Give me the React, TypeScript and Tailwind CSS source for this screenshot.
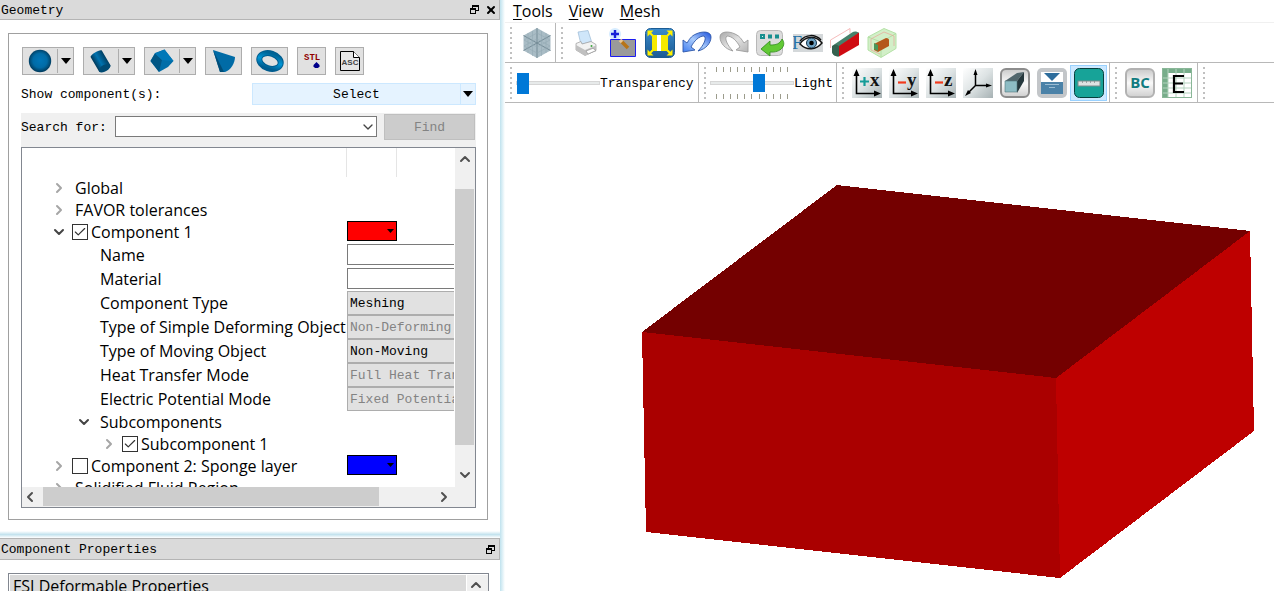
import { useState } from 'react'
import type { ReactNode } from 'react'
import { Check, ChevronDown, ChevronLeft, ChevronRight, ChevronUp, X } from 'lucide-react'

const MONO = "font-['Liberation_Mono',monospace] text-[13px] leading-5"

/* ---------- small shared pieces ---------- */

function Caret({ small }: { small?: boolean }) {
  return small ? (
    <svg width="7" height="4" viewBox="0 0 7 4"><path d="M0 0h7L3.5 4z" fill="#000" /></svg>
  ) : (
    <svg width="10" height="6" viewBox="0 0 10 6"><path d="M0 0h10L5 6z" fill="#000" /></svg>
  )
}

function FloatIcon() {
  return (
    <svg width="9" height="9" viewBox="0 0 9 9" fill="#000" shapeRendering="crispEdges">
      <path d="M2 0h7v6H6V5h2V2H3v1H2z" />
      <path fillRule="evenodd" d="M0 3h6v6H0zM1 5v3h4V5z" />
    </svg>
  )
}

function Handle() {
  return (
    <svg width="4" height="32" viewBox="0 0 4 32" className="shrink-0" aria-hidden>
      {[0, 5, 10, 15, 20, 25, 30].map(y => (
        <rect key={y} x="1" y={y} width="2" height="2" fill="#c0c0c0" />
      ))}
    </svg>
  )
}

/* ---------- geometry shape icons ---------- */

function Defs() {
  return (
    <svg width="0" height="0" className="absolute" aria-hidden>
      <defs>
        <radialGradient id="ball" cx="50%" cy="48%" r="52%">
          <stop offset="0" stopColor="#0076b8" />
          <stop offset="0.6" stopColor="#006ba6" />
          <stop offset="1" stopColor="#003a5c" />
        </radialGradient>
        <linearGradient id="cyl" x1="0" x2="1">
          <stop offset="0" stopColor="#00395a" />
          <stop offset="0.45" stopColor="#0073b0" />
          <stop offset="1" stopColor="#003f63" />
        </linearGradient>
        <linearGradient id="ring" x1="0" y1="0" x2="0" y2="1">
          <stop offset="0" stopColor="#006496" />
          <stop offset="0.5" stopColor="#0096d6" />
          <stop offset="1" stopColor="#005d90" />
        </linearGradient>
        <linearGradient id="tile" x1="0" y1="0" x2="1" y2="1">
          <stop offset="0" stopColor="#fff" />
          <stop offset="0.5" stopColor="#dde3e4" />
          <stop offset="1" stopColor="#a7b2b4" />
        </linearGradient>
        <linearGradient id="plate" x1="0" y1="0" x2="0" y2="1">
          <stop offset="0" stopColor="#c9c9c9" />
          <stop offset="0.5" stopColor="#fafafa" />
          <stop offset="1" stopColor="#cfcfcf" />
        </linearGradient>
        <linearGradient id="undo" x1="0" y1="1" x2="1" y2="0">
          <stop offset="0" stopColor="#3f7df0" />
          <stop offset="0.5" stopColor="#a9cbfb" />
          <stop offset="1" stopColor="#1a50dc" />
        </linearGradient>
        <linearGradient id="redo" x1="0" y1="0" x2="1" y2="1">
          <stop offset="0" stopColor="#a8a8a8" />
          <stop offset="0.5" stopColor="#e2e2e2" />
          <stop offset="1" stopColor="#b4b4b4" />
        </linearGradient>
        <linearGradient id="fit" x1="0" y1="0" x2="0" y2="1">
          <stop offset="0" stopColor="#3c8ccb" />
          <stop offset="1" stopColor="#1b5a94" />
        </linearGradient>
      </defs>
    </svg>
  )
}

const Sphere = () => (
  <svg width="24" height="24" viewBox="0 0 24 24"><circle cx="12" cy="12" r="11.200" fill="url(#ball)" /></svg>
)

const Cylinder = () => (
  <svg width="24" height="24" viewBox="0 0 24 24">
    <g transform="rotate(-30 12 12)">
      <path d="M5 3.500c0-2.500 13-2.500 13 0v17c0 2.500-13 2.500-13 0z" fill="url(#cyl)" />
      <ellipse cx="11.500" cy="20" rx="6.300" ry="3.300" fill="#004a73" />
    </g>
  </svg>
)

const Cube = () => (
  <svg width="24" height="24" viewBox="0 0 24 24">
    <path d="M0.500 12L5 4l9.500-3.500L23.500 12 18 18l-9 5z" fill="#006da8" />
    <path d="M0.500 12L5 4.500l7 6.500-3 12z" fill="#005684" />
    <path d="M5 4.500l9.500-4L23.500 12 12 11z" fill="#0078b8" />
  </svg>
)

const Cone = () => (
  <svg width="24" height="24" viewBox="0 0 24 24">
    <path d="M1 1l22 7c0 6-4 13-10 15H8z" fill="#006ba6" />
    <path d="M1 1l7 22h4z" fill="#004d78" />
  </svg>
)

const Torus = () => (
  <svg width="30" height="24" viewBox="0 0 30 24">
    <ellipse cx="15" cy="12" rx="11" ry="7.500" transform="rotate(18 15 12)" fill="none" stroke="#005c8e" strokeWidth="6" />
    <ellipse cx="15" cy="12" rx="11" ry="7.500" transform="rotate(18 15 12)" fill="none" stroke="url(#ring)" strokeWidth="4" />
  </svg>
)

const Stl = () => (
  <svg width="18" height="20" viewBox="0 0 18 20">
    <text x="1" y="9" fontFamily="Liberation Mono" fontSize="9" fontWeight="bold" fill="#900000">STL</text>
    <path d="M13.500 11l3 3v2h-1v1h-4v-1h-1v-2z" fill="#00008b" />
  </svg>
)

const Asc = () => (
  <svg width="20" height="20" viewBox="0 0 20 20">
    <path d="M0.500 0.500h13l6 6v13H0.500z" fill="#e6e6e6" stroke="#000" />
    <path d="M13.500 0.500v6h6" fill="#fff" stroke="#000" />
    <text x="10" y="14" textAnchor="middle" fontFamily="Liberation Sans" fontSize="8" fontWeight="bold" fill="#444">ASC</text>
  </svg>
)

const SHAPES: { label: string; icon: ReactNode; menu?: boolean; cls: string }[] = [
  { label: 'Sphere',   icon: <Sphere />,   menu: true, cls: 'w-[52px]' },
  { label: 'Cylinder', icon: <Cylinder />, menu: true, cls: 'w-[52px]' },
  { label: 'Box',      icon: <Cube />,     menu: true, cls: 'w-[52px]' },
  { label: 'Cone',     icon: <Cone />,     cls: 'w-[37px]' },
  { label: 'Torus',    icon: <Torus />,    cls: 'w-[37px]' },
  { label: 'STL',      icon: <Stl />,      cls: 'w-[29px]' },
  { label: 'ASC',      icon: <Asc />,      cls: 'w-[29px]' },
]

/* ---------- toolbar icons ---------- */

const Hexagon = () => (
  <svg width="28" height="30" viewBox="0 0 28 30">
    <path d="M14 0l13.500 7.500v15L14 30 0.500 22.500v-15z" fill="#a9bcc5" />
    <path d="M14 0v30M0.500 7.500l27 15M27.500 7.500l-27 15" stroke="#748b96" fill="none" />
    <path d="M5 5v20M9.500 3v25M18.500 3v25M23 5v20M1 12l13-7 13 7M1 18l13-7 13 7M1 12l13 7 13-7M1 18l13 7 13-7" stroke="#93a9b3" strokeWidth="0.6" fill="none" />
  </svg>
)

const Printer = () => (
  <svg width="24" height="26" viewBox="0 0 24 26">
    <path d="M4 2l10-1.500 3.500 11-10.500 3z" fill="#cfe6fa" stroke="#9bb9d4" strokeWidth="0.7" />
    <path d="M2 13.500l5-2 1 2.500 9-2.500 5 3v6L11 25.500 2 20z" fill="#f2f2f2" stroke="#9a9a9a" strokeWidth="0.7" />
    <path d="M2 15l9 5 11-4.500v5.500L11 25.500 2 20z" fill="#c0c0c0" />
    <path d="M12 21l7-2.700 3 2.200-8 3.500z" fill="#fff" stroke="#888" strokeWidth="0.6" />
    <circle cx="17.500" cy="16" r="1" fill="#3ba53b" />
  </svg>
)

const AddRegion = () => (
  <svg width="28" height="30" viewBox="0 0 28 30">
    <circle cx="6" cy="6" r="6" fill="#d6ecff" />
    <path d="M1.500 11.500h25v17h-25z" fill="#9a9a9a" stroke="#1c1cf0" />
    <path d="M6 2v8M2 6h8" stroke="#1620d8" strokeWidth="2.400" />
    <path d="M12 13l7 7" stroke="#b87417" strokeWidth="3.500" />
    <path d="M11 12l2 2" stroke="#e8c592" strokeWidth="3.500" />
  </svg>
)

const FitView = () => (
  <svg width="30" height="30" viewBox="0 0 30 30">
    <rect x="0.500" y="0.500" width="29" height="29" rx="5" fill="url(#fit)" stroke="#1b5c94" />
    <path d="M8 8l-4.500-4.500M22 8l4.500-4.500M8 22l-4.500 4.500M22 22l4.500 4.500" stroke="#fff100" strokeWidth="2" />
    <path d="M2.500 2.500h6l-6 6zM27.500 2.500h-6l6 6zM2.500 27.500h6l-6-6zM27.500 27.500h-6l6-6z" fill="#fff100" />
    <path d="M7 7h16v16H7z" fill="#f5ea00" />
    <path d="M12 7h4v16h-4z" fill="#fff" />
  </svg>
)

const Undo = () => (
  <svg width="30" height="24" viewBox="0 0 30 24">
    <path d="M1 9v12l12-2-4-3c3-6 8-11 13-11 3 2 0 9-6 15 8-2 13-8 13-14 0-6-9-6-15-3-5 2-7 6-9 9z" fill="url(#undo)" stroke="#2c56a8" strokeWidth="0.9" />
  </svg>
)

const Redo = () => (
  <svg width="30" height="24" viewBox="0 0 30 24">
    <path d="M29 9v12l-12-2 4-3C18 10 13 5 8 5c-3 2 0 9 6 15C6 18 1 12 1 6c0-6 9-6 15-3 5 2 7 6 9 9z" fill="url(#redo)" stroke="#9c9c9c" strokeWidth="0.9" />
  </svg>
)

const Apply = () => (
  <svg width="29" height="28" viewBox="0 0 29 28">
    <rect x="0.500" y="1.500" width="26" height="25" rx="4" fill="#dcdcdc" stroke="#b8b8b8" />
    <path d="M5 6h3v3H5zM13 6.500h2v2h-2zM20 6.500h2v2h-2z" fill="#d8f4f4" stroke="#158e8e" strokeWidth="2" />
    <path d="M5 20l9-8v4c6 0 10-1 12-6 5 6-1 14-12 13v4z" fill="#62c935" stroke="#2e8c1a" strokeWidth="0.8" />
  </svg>
)

const EyeView = () => (
  <svg width="30" height="18" viewBox="0 0 30 18">
    <rect width="30" height="18" fill="#d4d8da" />
    <text x="-1" y="15" fontFamily="Liberation Serif" fontSize="18" fill="#2673a8">F</text>
    <path d="M7 10c5-8 16-9 22-1-6 7-15 8-22 1z" fill="#fff" stroke="#111" strokeWidth="1.400" />
    <path d="M7 7c6-7 15-7 21-1" stroke="#111" strokeWidth="1.500" fill="none" />
    <circle cx="18.500" cy="9" r="5" fill="#6fa3c4" stroke="#14344b" />
    <circle cx="18.500" cy="9" r="2.300" fill="#000" />
  </svg>
)

const ClipRed = () => (
  <svg width="30" height="30" viewBox="0 0 30 30">
    <path d="M0.500 20v-8L20 0.500v5" stroke="#f3a9a9" strokeWidth="0.8" fill="none" />
    <path d="M2 18L22 4.500c2-1.500 5-1.500 7 0.500L9 19v9c-4 1-7-2-7-5z" fill="#47806a" />
    <path d="M9 18L29 4.500V17L9 28.500z" fill="#cf0c12" />
    <path d="M2 18.500c2-2.500 6-2.500 7 0V28.500c-4 0-7-2-7-5z" fill="#35614f" />
  </svg>
)

const ClipGreen = () => (
  <svg width="30" height="30" viewBox="0 0 30 30">
    <path d="M1 9L17 0.500l12 5v15L14 29.500 1 22z" fill="#d2efc8" stroke="#b4e2a6" />
    <path d="M1 9l13 5L29 5.500M14 14v15" stroke="#b2dfa4" fill="none" />
    <path d="M4 11v11l9 4M27 8v10M4 11l13-7 10 4" stroke="#eaa698" fill="none" strokeWidth="0.7" />
    <path d="M7 16l12-6c2 0 3 1 3 2v6l-11 6-4-2z" fill="#b4571b" />
    <path d="M7 15l4 2v6l-4-2z" fill="#4c9558" />
  </svg>
)

function AxisTile({ sign, axis, color }: { sign: string; axis: string; color: string }) {
  return (
    <svg width="30" height="30" viewBox="0 0 30 30">
      <rect width="30" height="30" fill="url(#tile)" />
      <path d="M4.500 5v20.500H24" stroke="#000" strokeWidth="1.600" fill="none" />
      <path d="M4.500 1l3 7h-6zM29 25.500l-7-3v6z" fill="#000" />
      <path d={sign === '+' ? 'M8 13.500h9M12.500 9v9' : 'M9 14.500h8'} stroke={color} strokeWidth="2.200" />
      <text x="18" y="18" fontFamily="Liberation Serif" fontSize="19" fontWeight="bold" fill="#111">{axis}</text>
    </svg>
  )
}

const Isometric = () => (
  <svg width="30" height="30" viewBox="0 0 30 30">
    <rect width="30" height="30" fill="url(#tile)" />
    <path d="M12.500 5v12.500H25M12.500 17.500L5 25" stroke="#000" strokeWidth="1.500" fill="none" />
    <path d="M12.500 1l2 6h-4zM29 17.500l-6-2v4zM2 28l3-6 3 3z" fill="#000" />
  </svg>
)

const Perspective = () => (
  <svg width="30" height="30" viewBox="0 0 30 30">
    <rect x="1" y="1" width="28" height="28" rx="5" fill="url(#plate)" stroke="#8c8c8c" strokeWidth="2" />
    <path d="M5 13L17 5l7-1-7 9z" fill="#52676d" />
    <path d="M17 13l7-9v9l-7 12z" fill="#26383d" />
    <path d="M5 13h12v11H5z" fill="#8dbcc4" stroke="#50757c" strokeWidth="0.6" />
  </svg>
)

const FreeSurface = () => (
  <svg width="30" height="30" viewBox="0 0 30 30">
    <rect width="30" height="30" rx="5" fill="#c3c6c9" />
    <path d="M4 4h22v22H4z" fill="#fff" />
    <path d="M4 14h22v12H4z" fill="#4b82a8" />
    <path d="M7 5h16l-8 8z" fill="#2e6d9c" />
    <path d="M8 16.500h14M12 19.500h6" stroke="#9bbdd4" />
  </svg>
)

const Ruler = () => (
  <svg width="30" height="30" viewBox="0 0 30 30">
    <rect x="0.500" y="0.500" width="29" height="29" rx="5" fill="#17a398" stroke="#073f3c" />
    <rect x="4" y="13" width="22" height="5" fill="#dfe2e2" stroke="#7f8a8a" />
    <path d="M8.500 13v2M12.500 13v2M16.500 13v2M20.500 13v2" stroke="#7f8a8a" strokeWidth="0.7" />
  </svg>
)

const Boundary = () => (
  <svg width="30" height="30" viewBox="0 0 30 30">
    <rect x="1" y="1" width="28" height="28" rx="5" fill="url(#plate)" stroke="#b2b2b2" strokeWidth="2" />
    <text x="15" y="20" textAnchor="middle" fontFamily="Open Sans" fontSize="15" fontWeight="bold" fill="#127c80">BC</text>
  </svg>
)

const Sheet = () => (
  <svg width="30" height="30" viewBox="0 0 30 30">
    <rect x="0.500" y="0.500" width="29" height="29" fill="#fff" stroke="#8ab798" />
    <path d="M1 1h28v4H1zM1 5h5v24H1z" fill="#77ad8a" />
    <path d="M1 10h28M1 15h28M1 20h28M1 25h28M6 1v28M14 1v28M22 1v28" stroke="#b5d3bf" />
    <path d="M22 8H12v16h10M12 15.500h9" stroke="#000" strokeWidth="2.200" fill="none" />
  </svg>
)

const MAIN_TOOLS: { label: string; icon: ReactNode }[] = [
  { label: 'Print',        icon: <Printer /> },
  { label: 'Add region',   icon: <AddRegion /> },
  { label: 'Fit view',     icon: <FitView /> },
  { label: 'Undo',         icon: <Undo /> },
  { label: 'Redo',         icon: <Redo /> },
  { label: 'Apply',        icon: <Apply /> },
  { label: 'FAVORize',     icon: <EyeView /> },
  { label: 'Clip surface', icon: <ClipRed /> },
  { label: 'Clip box',     icon: <ClipGreen /> },
]

const VIEW_TOOLS: { label: string; icon: ReactNode }[] = [
  { label: '+x view',      icon: <AxisTile sign="+" axis="x" color="#159c98" /> },
  { label: '-y view',      icon: <AxisTile sign="-" axis="y" color="#f23a1c" /> },
  { label: '-z view',      icon: <AxisTile sign="-" axis="z" color="#f23a1c" /> },
  { label: 'Isometric',    icon: <Isometric /> },
  { label: 'Perspective',  icon: <Perspective /> },
  { label: 'Free surface', icon: <FreeSurface /> },
]

function ToolButton({ label, children, active }: { label: string; children: ReactNode; active?: boolean }) {
  return (
    <button
      aria-label={label}
      className={`flex h-9 w-[37px] shrink-0 items-center justify-center ${
        active ? 'border border-[#99d1ff] bg-[#cce8ff]' : ''
      }`}
    >
      {children}
    </button>
  )
}

/* ---------- component tree ---------- */

type Row = {
  id: string
  label: string
  depth: 1 | 2 | 3
  open?: boolean
  check?: boolean
  color?: 'red' | 'blue'
  input?: boolean
  select?: string
  disabled?: boolean
}

const ROWS: Row[] = [
  { id: 'global',    label: 'Global', depth: 1, open: false },
  { id: 'favor',     label: 'FAVOR tolerances', depth: 1, open: false },
  { id: 'comp1',     label: 'Component 1', depth: 1, open: true, check: true, color: 'red' },
  { id: 'name',      label: 'Name', depth: 2, input: true },
  { id: 'material',  label: 'Material', depth: 2, input: true },
  { id: 'type',      label: 'Component Type', depth: 2, select: 'Meshing' },
  { id: 'deforming', label: 'Type of Simple Deforming Object', depth: 2, select: 'Non-Deforming', disabled: true },
  { id: 'moving',    label: 'Type of Moving Object', depth: 2, select: 'Non-Moving' },
  { id: 'heat',      label: 'Heat Transfer Mode', depth: 2, select: 'Full Heat Transfer', disabled: true },
  { id: 'electric',  label: 'Electric Potential Mode', depth: 2, select: 'Fixed Potential', disabled: true },
  { id: 'subs',      label: 'Subcomponents', depth: 2, open: true },
  { id: 'sub1',      label: 'Subcomponent 1', depth: 3, open: false, check: true },
  { id: 'comp2',     label: 'Component 2: Sponge layer', depth: 1, open: false, check: false, color: 'blue' },
  { id: 'solid',     label: 'Solidified Fluid Region', depth: 1, open: false },
]

const INDENT = { 1: 'pl-7', 2: 'pl-[53px]', 3: 'pl-[78px]' }

function TreeRow({ row }: { row: Row }) {
  const [checked, setChecked] = useState(!!row.check)
  const isField = row.input || row.select
  const hasCheck = row.check !== undefined

  return (
    <li className={`flex shrink-0 items-start ${isField ? 'h-6' : 'h-[22px]'}`}>
      <div className={`flex h-full w-[325px] shrink-0 items-center whitespace-nowrap ${INDENT[row.depth]}`}>
        <span className="flex w-[18px] shrink-0 justify-center">
          {row.open === true && <ChevronDown size={16} strokeWidth={3} color="#444" />}
          {row.open === false && <ChevronRight size={16} strokeWidth={3} color="#a6a6a6" />}
        </span>
        {hasCheck && (
          <span className="ml-1 grid shrink-0">
            <input
              id={row.id}
              type="checkbox"
              checked={checked}
              onChange={e => setChecked(e.target.checked)}
              className="col-start-1 row-start-1 size-4 appearance-none border border-[#333] bg-white"
            />
            {checked && <Check size={14} strokeWidth={2} color="#333" className="pointer-events-none col-start-1 row-start-1 place-self-center" />}
          </span>
        )}
        {hasCheck || isField ? (
          <label htmlFor={row.id} className={hasCheck ? 'ml-[3px]' : 'ml-[7px]'}>{row.label}</label>
        ) : (
          <span className="ml-[7px]">{row.label}</span>
        )}
      </div>
      {row.color && (
        <button
          aria-label={`${row.label} color`}
          className={`flex h-5 w-[50px] items-center justify-end border border-black pr-[2px] ${
            row.color === 'red' ? 'bg-[#ff0000]' : 'bg-[#0000ff]'
          }`}
        >
          <Caret small />
        </button>
      )}
      {row.input && <input id={row.id} className="mt-px h-[21px] w-40 shrink-0 border border-[#7a7a7a] bg-white px-1" />}
      {row.select && (
        <select
          id={row.id}
          disabled={row.disabled}
          className={`${MONO} h-6 w-40 shrink-0 appearance-none border border-[#adadad] bg-[#e1e1e1] pt-[2px] pl-[2px] ${
            row.disabled ? 'text-[#838383] opacity-100' : 'text-black'
          }`}
        >
          <option>{row.select}</option>
        </select>
      )}
    </li>
  )
}

function ComponentTree() {
  return (
    <div className="flex min-h-0 flex-1 flex-col border border-[#828790] bg-white">
      <div className="flex min-h-0 flex-1">
        <div className="flex min-w-0 flex-1 flex-col overflow-hidden">
          <div className="flex h-[29px] shrink-0">
            <div className="w-[325px] border-r border-[#e5e5e5]" />
            <div className="w-[50px] border-r border-[#e5e5e5]" />
          </div>
          <ul className="flex min-h-0 flex-1 flex-col overflow-hidden text-[16px] leading-[22px]">
            {ROWS.map(row => <TreeRow key={row.id} row={row} />)}
          </ul>
        </div>
        <div className="ml-px flex w-5 flex-col bg-[#f0f0f0]">
          <button aria-label="Scroll up" className="flex h-[41px] justify-center pt-[3px]">
            <ChevronUp size={16} strokeWidth={3} color="#505050" />
          </button>
          <div className="mr-px flex-1 bg-[#cdcdcd]" />
          <button aria-label="Scroll down" className="flex h-[42px] items-end justify-center pb-1">
            <ChevronDown size={16} strokeWidth={3} color="#505050" />
          </button>
        </div>
      </div>
      <div className="flex h-5 items-start bg-[#f0f0f0]">
        <button aria-label="Scroll left" className="flex h-[19px] w-[21px] items-center">
          <ChevronLeft size={16} strokeWidth={3} color="#505050" />
        </button>
        <div className="h-[19px] w-[336px] bg-[#cdcdcd]" />
        <div className="flex-1" />
        <button aria-label="Scroll right" className="mr-[21px] flex h-[19px] w-[21px] items-center justify-center">
          <ChevronRight size={16} strokeWidth={3} color="#505050" />
        </button>
      </div>
    </div>
  )
}

/* ---------- docks ---------- */

function GeometryDock() {
  return (
    <section className="flex min-h-0 flex-1 flex-col">
      <header className={`${MONO} flex h-5 shrink-0 items-center border-r border-b border-[#b4b4b4] bg-[#dadada] pl-px`}>
        <h2 className="pt-[2px]">Geometry</h2>
        <div className="flex-1" />
        <button aria-label="Float" className="mr-[6px]"><FloatIcon /></button>
        <button aria-label="Close" className="mr-[2px]"><X size={12} strokeWidth={4} /></button>
      </header>
      <div className="mt-[13px] mr-3 mb-[11px] ml-2 flex min-h-0 flex-1 flex-col border border-[#a0a0a0] pt-[13px] pr-[11px] pb-[11px] pl-3">
        <div className="flex gap-[9px] pl-px">
          {SHAPES.map(s => (
            <button
              key={s.label}
              aria-label={s.label}
              className={`flex h-7 items-center border border-[#adadad] bg-[#e1e1e1] ${s.cls}`}
            >
              <span className="flex flex-1 justify-center">{s.icon}</span>
              {s.menu && (
                <span className="flex h-6 w-4 items-center justify-center border-l border-[#adadad]"><Caret /></span>
              )}
            </button>
          ))}
        </div>
        <div className={`${MONO} mt-2 flex h-[22px] items-center justify-between`}>
          <span className="pt-[2px]">Show component(s):</span>
          <button className="flex h-[22px] w-56 items-center border border-[#cce8ff] bg-[#e5f3ff]">
            <span className="flex-1 pt-[2px]">Select</span>
            <span className="flex h-5 w-[15px] items-center justify-center border-l border-[#cce8ff]"><Caret /></span>
          </button>
        </div>
        <div className={`${MONO} mt-2 flex h-[34px] items-start bg-[#f0f0f0] pt-px pr-px`}>
          <label htmlFor="search" className="w-[94px] pt-1">Search for:</label>
          <span className="mt-[2px] grid flex-1">
            <select id="search" className="col-start-1 row-start-1 h-[21px] appearance-none border border-[#7a7a7a] bg-white pl-1">
              <option></option>
            </select>
            <ChevronDown size={16} strokeWidth={2} color="#444" className="pointer-events-none col-start-1 row-start-1 mr-px self-center justify-self-end" />
          </span>
          <button disabled className="ml-[7px] h-[26px] w-[91px] border border-[#bfbfbf] bg-[#cccccc] pt-[2px] text-[#838383]">Find</button>
        </div>
        <ComponentTree />
      </div>
    </section>
  )
}

function PropertiesDock() {
  return (
    <section className="flex h-[53px] shrink-0 flex-col">
      <header className={`${MONO} flex h-[22px] shrink-0 items-center border border-l-0 border-[#b4b4b4] bg-[#dadada] pl-px`}>
        <h2 className="pt-[2px]">Component Properties</h2>
        <div className="flex-1" />
        <button aria-label="Float" className="mr-1"><FloatIcon /></button>
      </header>
      <div className="mt-[13px] mr-[11px] ml-2 flex min-h-0 flex-1 gap-px overflow-hidden border border-b-0 border-[#828790] pt-px pl-px">
        <h3 className="flex-1 bg-[#dadada] pl-[3px] text-[16px] leading-[22px] whitespace-nowrap">FSI Deformable Properties</h3>
        <button aria-label="Scroll up" className="flex w-[21px] bg-[#f0f0f0] pt-[2px] pl-px">
          <ChevronUp size={16} strokeWidth={3} color="#505050" />
        </button>
      </div>
    </section>
  )
}

/* ---------- right side ---------- */

const THUMB =
  'm-0 h-[22px] w-[84px] appearance-none bg-transparent ' +
  '[&::-webkit-slider-runnable-track]:h-1 [&::-webkit-slider-runnable-track]:border [&::-webkit-slider-runnable-track]:border-[#d6d6d6] [&::-webkit-slider-runnable-track]:bg-[#e7eaea] ' +
  '[&::-webkit-slider-thumb]:w-3 [&::-webkit-slider-thumb]:appearance-none [&::-webkit-slider-thumb]:bg-[#0078d7]'

function Ticks() {
  return (
    <div className="flex w-[84px] justify-between px-[6px]">
      {Array.from({ length: 11 }, (_, i) => <span key={i} className="h-[5px] w-px bg-[#9c9c8c]" />)}
    </div>
  )
}

const MENUS = ['Tools', 'View', 'Mesh']

function Toolbars() {
  return (
    <header className="shrink-0">
      <nav className="flex h-[23px] items-center gap-4 border-b border-[#f0f0f0] pl-2 text-[16px] leading-[22px]">
        {MENUS.map(m => (
          <a key={m} href="#"><span className="underline underline-offset-2">{m[0]}</span>{m.slice(1)}</a>
        ))}
      </nav>
      <div className="flex h-10 items-center border-b border-[#b8b8b8]">
        <div className="flex h-full w-[51px] items-center border-r border-[#b8b8b8] pl-1">
          <Handle />
          <button aria-label="Mesh block" className="ml-[10px]"><Hexagon /></button>
        </div>
        <div className="flex items-center pl-1">
          <Handle />
          <div className="ml-[3px] flex">
            {MAIN_TOOLS.map(t => <ToolButton key={t.label} label={t.label}>{t.icon}</ToolButton>)}
          </div>
        </div>
      </div>
      <div className={`${MONO} flex h-10 items-center border-b border-[#b8b8b8]`}>
        <div className="flex h-full w-[194px] items-center border-r border-[#b8b8b8] pl-1">
          <Handle />
          <input id="transparency" type="range" min="0" max="10" defaultValue="0" className={`${THUMB} ml-[3px] [&::-webkit-slider-thumb]:-mt-[9px] [&::-webkit-slider-thumb]:h-[21px]`} />
          <label htmlFor="transparency" className="pt-[2px]">Transparency</label>
        </div>
        <div className="flex h-full w-[138px] items-center border-r border-[#b8b8b8] pl-1">
          <Handle />
          <div className="ml-[3px] flex flex-col">
            <Ticks />
            <input id="light" type="range" min="0" max="10" defaultValue="6" className={`${THUMB} [&::-webkit-slider-thumb]:-mt-2 [&::-webkit-slider-thumb]:h-[18px]`} />
            <Ticks />
          </div>
          <label htmlFor="light" className="pt-[2px]">Light</label>
        </div>
        <div className="flex h-full w-[273px] items-center border-r border-[#b8b8b8] pl-1">
          <Handle />
          <div className="ml-[3px] flex">
            {VIEW_TOOLS.map(t => <ToolButton key={t.label} label={t.label}>{t.icon}</ToolButton>)}
            <ToolButton label="Measure" active><Ruler /></ToolButton>
          </div>
        </div>
        <div className="flex h-full w-[88px] items-center border-r border-[#b8b8b8] pl-1">
          <Handle />
          <div className="ml-[3px] flex">
            <ToolButton label="Boundary conditions"><Boundary /></ToolButton>
            <ToolButton label="Mesh table"><Sheet /></ToolButton>
          </div>
        </div>
        <div className="pl-1"><Handle /></div>
      </div>
    </header>
  )
}

function Viewport() {
  return (
    <div className="min-h-0 flex-1">
      <svg viewBox="0 0 769 488" className="h-full w-full" shapeRendering="crispEdges">
        <polygon points="332,82 745,128 551,275 137,229" fill="#740000" />
        <polygon points="137,229 551,275 555,475 141,429" fill="#aa0000" />
        <polygon points="551,275 745,128 749,328 555,475" fill="#be0000" />
      </svg>
    </div>
  )
}

export default function App() {
  return (
    <div className="flex h-screen overflow-hidden bg-white font-['Open_Sans',sans-serif] text-black">
      <Defs />
      <aside className="flex w-[500px] shrink-0 flex-col">
        <GeometryDock />
        <div className="h-[7px] shrink-0 bg-linear-to-b from-white via-[#c4e3ee] to-white" />
        <PropertiesDock />
      </aside>
      <div className="w-[5px] shrink-0 bg-linear-to-r from-[#bfe2ee] to-white" />
      <main className="flex min-w-0 flex-1 flex-col">
        <Toolbars />
        <Viewport />
      </main>
    </div>
  )
}
